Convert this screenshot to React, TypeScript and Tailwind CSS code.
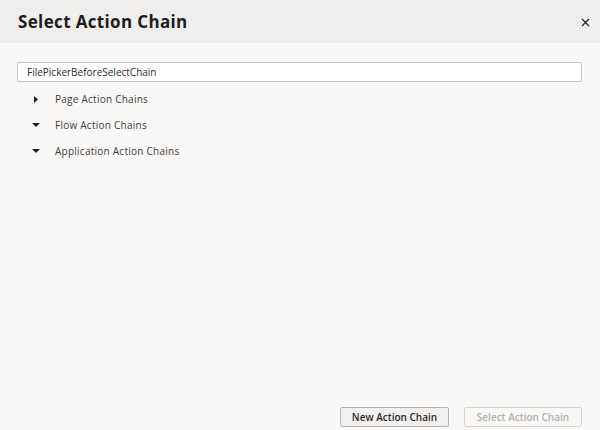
import React from "react";

const TreeRow: React.FC<{ label: string; open?: boolean }> = ({ label, open }) => (
  <div className="flex items-center h-[26px]">
    <div className="w-[38px] flex justify-center">
      {open ? (
        <svg width="8" height="4" viewBox="0 0 8 4">
          <path d="M0 0 L8 0 L4 4 Z" fill="#1f1f1f" />
        </svg>
      ) : (
        <svg width="4" height="7" viewBox="0 0 4 7">
          <path d="M0 0 L4 3.5 L0 7 Z" fill="#1f1f1f" />
        </svg>
      )}
    </div>
    <span className="text-[10px] text-[#3d3d3d] tracking-[0.25px]">{label}</span>
  </div>
);

const App: React.FC = () => {
  return (
    <div
      className="w-[600px] h-[430px] flex flex-col bg-[#f9f8f6]"
      style={{ fontFamily: '"Open Sans", "Noto Sans", sans-serif' }}
    >
      <div className="h-[43px] bg-[#efeeec] flex items-center justify-between pl-[18px] pr-[10px] shrink-0">
        <h1 className="text-[17px] font-bold text-[#1c1c1c] tracking-[0.35px]">Select Action Chain</h1>
        <svg width="9" height="9" viewBox="0 0 9 9" className="mt-[1px]">
          <path d="M1 1 L8 8 M8 1 L1 8" stroke="#2a2a2a" strokeWidth="1.4" />
        </svg>
      </div>

      <div className="flex-1 flex flex-col px-[17px] pt-[19px]">
        <input
          type="text"
          defaultValue="FilePickerBeforeSelectChain"
          className="h-[20px] w-[565px] bg-white border border-[#c9c7c4] rounded-[2px] px-[9px] text-[10px] text-[#2b2b2b] outline-none"
        />
        <div className="mt-[4px]">
          <TreeRow label="Page Action Chains" />
          <TreeRow label="Flow Action Chains" open />
          <TreeRow label="Application Action Chains" open />
        </div>
      </div>

      <div className="flex justify-end gap-[15px] pr-[18px] pb-[3px] shrink-0">
        <button className="h-[20px] w-[109px] bg-[#f1f0ee] border border-[#b7b5b2] rounded-[2px] text-[10px] font-semibold text-[#2b2b2b]">
          New Action Chain
        </button>
        <button className="h-[20px] w-[118px] bg-[#f9f8f6] border border-[#d6d4d1] rounded-[2px] text-[10px] font-semibold text-[#b3b1ae]">
          Select Action Chain
        </button>
      </div>
    </div>
  );
};

export default App;
